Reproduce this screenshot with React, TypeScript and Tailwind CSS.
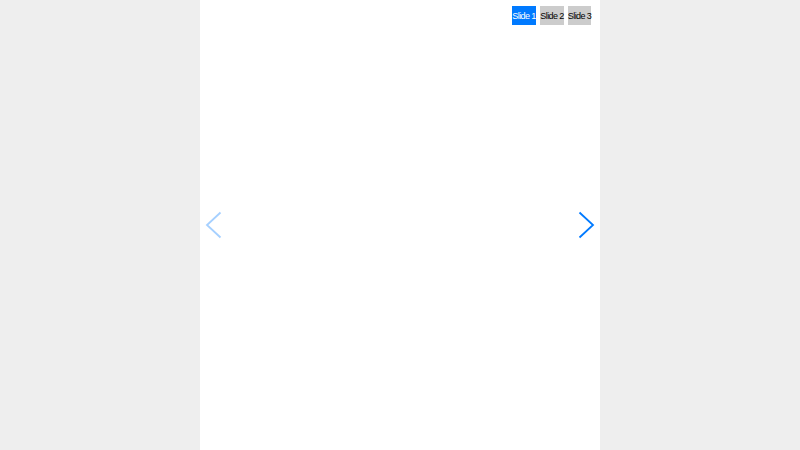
import React from "react";

export default function App() {
  return (
    <div className="w-[800px] h-[450px] bg-[#eeeeee] flex justify-center" style={{ fontFamily: '"Liberation Sans", Arial, sans-serif' }}>
      <div className="relative w-[400px] h-[450px] bg-white overflow-hidden">
        <div className="absolute top-[6px] right-[9px] flex gap-[4px]">
          <button className="w-[24px] h-[19px] bg-[#007aff] text-white text-[9px] tracking-[-0.6px] leading-[20px] flex justify-center whitespace-nowrap overflow-visible">Slide 1</button>
          <button className="w-[24px] h-[19px] bg-[#cccccc] text-black text-[9px] tracking-[-0.6px] leading-[20px] flex justify-center whitespace-nowrap overflow-visible">Slide 2</button>
          <button className="w-[23px] h-[19px] bg-[#cccccc] text-black text-[9px] tracking-[-0.6px] leading-[20px] flex justify-center whitespace-nowrap overflow-visible">Slide 3</button>
        </div>
        <div className="absolute left-[5px] top-[211px] opacity-35">
          <svg width="18" height="28" viewBox="0 0 18 28" fill="none">
            <path d="M15.5 1.5 L2 14 L15.5 26.5" stroke="#007aff" strokeWidth="1.8" />
          </svg>
        </div>
        <div className="absolute right-[5px] top-[211px]">
          <svg width="18" height="28" viewBox="0 0 18 28" fill="none">
            <path d="M2.5 1.5 L16 14 L2.5 26.5" stroke="#007aff" strokeWidth="1.8" />
          </svg>
        </div>
      </div>
    </div>
  );
}
